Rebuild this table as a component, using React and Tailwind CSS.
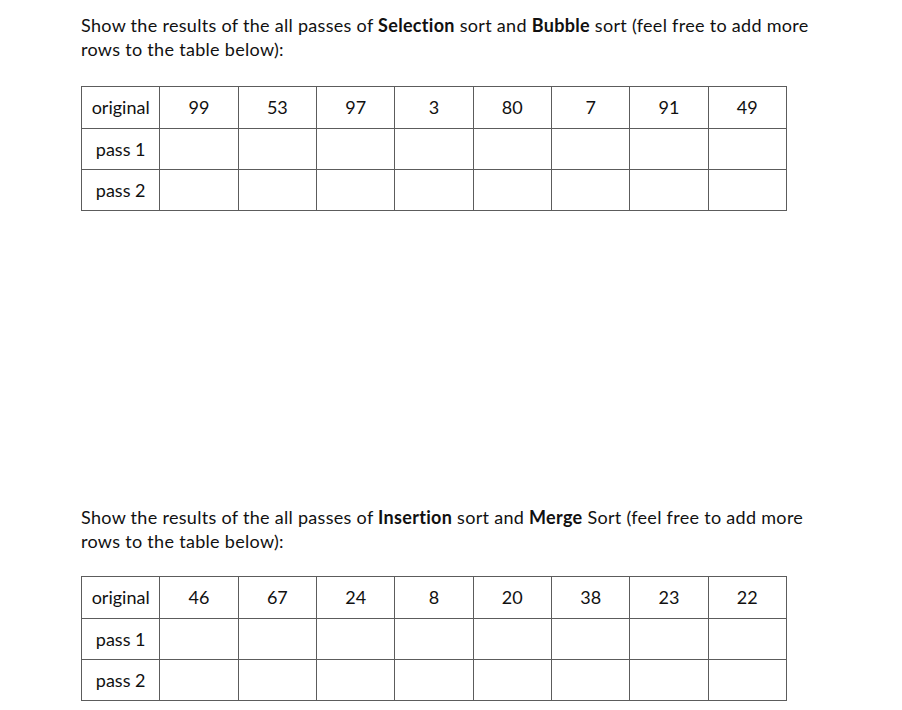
const SortTable = ({ values }) => {
  const rows = ['original', 'pass 1', 'pass 2'];
  return (
    <table className="w-[706px] border-collapse table-fixed text-[18px] text-[#111]">
      <tbody>
        {rows.map((label, r) => (
          <tr key={label} className={r === 0 ? 'h-[42px]' : 'h-[41px]'}>
            <td className="border border-[#5c5c5c] text-center align-middle">{label}</td>
            {values.map((v, i) => (
              <td key={i} className="border border-[#5c5c5c] text-center align-middle">
                {r === 0 ? v : ''}
              </td>
            ))}
          </tr>
        ))}
      </tbody>
    </table>
  );
};

const App = () => {
  return (
    <div className="w-[902px] h-[710px] bg-white pl-[81px] pt-[13px] font-['Lato','Liberation_Sans',sans-serif] text-[#111]">
      {/* Selection / Bubble */}
      <p className="text-[18px] leading-[24px] w-[740px] tracking-[0.3px]">
        Show the results of the all passes of <b>Selection</b> sort and <b>Bubble</b> sort (feel free to add more rows to the table below):
      </p>
      <div className="mt-[25px]">
        <SortTable values={[99, 53, 97, 3, 80, 7, 91, 49]} />
      </div>

      {/* Insertion / Merge */}
      <p className="mt-[294px] text-[18px] leading-[24px] w-[740px] tracking-[0.3px]">
        Show the results of the all passes of <b>Insertion</b> sort and <b>Merge</b> Sort (feel free to add more rows to the table below):
      </p>
      <div className="mt-[23px]">
        <SortTable values={[46, 67, 24, 8, 20, 38, 23, 22]} />
      </div>
    </div>
  );
};

export default App;
